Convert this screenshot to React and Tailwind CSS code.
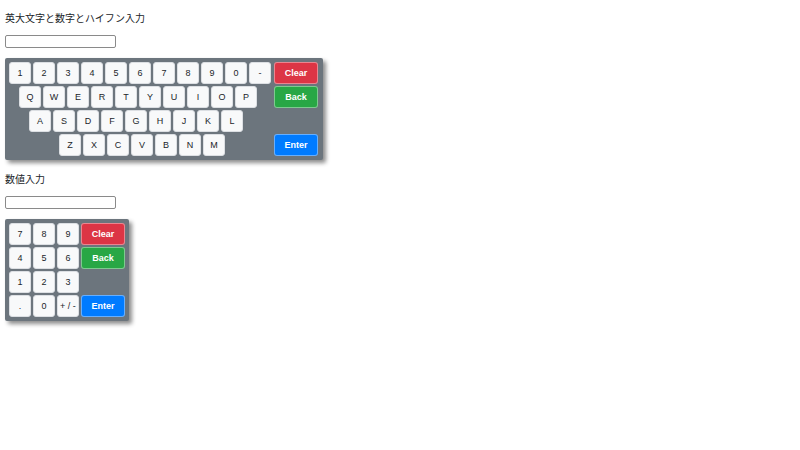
import React from "react";

const font = { fontFamily: '"Liberation Sans", "Noto Sans CJK JP", sans-serif' };

function Key({ label }) {
  return (
    <div className="flex h-[22px] w-[22px] items-center justify-center rounded-[3px] border border-[#dcdfe3] bg-[#f8f9fa] text-[9px] leading-none text-[#212529]">
      {label}
    </div>
  );
}

function Action({ label, color }) {
  return (
    <div
      className={`flex h-[22px] w-[44px] items-center justify-center rounded-[3px] border border-white/40 text-[9px] font-bold leading-none text-white ${color}`}
    >
      {label}
    </div>
  );
}

function Row({ keys, className = "" }) {
  return (
    <div className={`flex gap-[2px] ${className}`}>
      {keys.map((k) => (
        <Key key={k} label={k} />
      ))}
    </div>
  );
}

export default function App() {
  return (
    <div className="min-h-[450px] bg-white pl-[5px] pt-[12px] text-[#212529]" style={font}>
      <div className="h-[12px] text-[10px] leading-[12px]" style={{ fontFamily: '"Noto Sans CJK JP", sans-serif' }}>
        英大文字と数字とハイフン入力
      </div>
      <div className="mt-[11px] h-[13px] w-[111px] rounded-[2px] border border-[#8a8a8a] bg-white" />

      {/* alphanumeric keyboard */}
      <div className="mt-[10px] flex w-[318px] flex-col gap-[2px] rounded-[2px] bg-[#6c757d] p-[4px] pr-[5px] shadow-[3px_3px_4px_rgba(0,0,0,0.45)]">
        <div className="flex">
          <Row keys={["1", "2", "3", "4", "5", "6", "7", "8", "9", "0", "-"]} />
          <div className="ml-[3px]">
            <Action label="Clear" color="bg-[#dc3545]" />
          </div>
        </div>
        <div className="flex justify-between">
          <Row className="pl-[10px]" keys={["Q", "W", "E", "R", "T", "Y", "U", "I", "O", "P"]} />
          <Action label="Back" color="bg-[#28a745]" />
        </div>
        <div className="flex">
          <Row className="pl-[20px]" keys={["A", "S", "D", "F", "G", "H", "J", "K", "L"]} />
        </div>
        <div className="flex justify-between">
          <Row className="pl-[50px]" keys={["Z", "X", "C", "V", "B", "N", "M"]} />
          <Action label="Enter" color="bg-[#007bff]" />
        </div>
      </div>

      <div className="mt-[13px] h-[12px] text-[10px] leading-[12px]" style={{ fontFamily: '"Noto Sans CJK JP", sans-serif' }}>
        数値入力
      </div>
      <div className="mt-[11px] h-[13px] w-[111px] rounded-[2px] border border-[#8a8a8a] bg-white" />

      {/* numeric keypad */}
      <div className="mt-[10px] flex w-[124px] flex-col gap-[2px] rounded-[2px] bg-[#6c757d] p-[4px] shadow-[3px_3px_4px_rgba(0,0,0,0.45)]">
        <div className="flex gap-[2px]">
          <Row keys={["7", "8", "9"]} />
          <Action label="Clear" color="bg-[#dc3545]" />
        </div>
        <div className="flex gap-[2px]">
          <Row keys={["4", "5", "6"]} />
          <Action label="Back" color="bg-[#28a745]" />
        </div>
        <div className="flex gap-[2px]">
          <Row keys={["1", "2", "3"]} />
        </div>
        <div className="flex gap-[2px]">
          <Row keys={[".", "0", "+ / -"]} />
          <Action label="Enter" color="bg-[#007bff]" />
        </div>
      </div>
    </div>
  );
}
